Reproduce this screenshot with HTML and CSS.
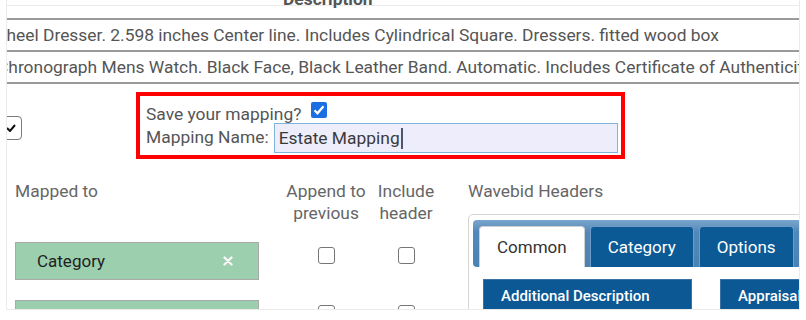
FILE: index.html
```html
<!DOCTYPE html>
<html lang="en">
<head>
<meta charset="utf-8">
<title>Mapping</title>
<link rel="stylesheet" href="styles.css">
</head>
<body>
<div class="frame">
  <div class="head"><div class="head-text">Description</div></div>
  <div class="desc-row first">Wheel Dresser. 2.598 inches Center line. Includes Cylindrical Square. Dressers. fitted wood box</div>
  <div class="desc-row second">Chronograph Mens Watch. Black Face, Black Leather Band. Automatic. Includes Certificate of Authenticity</div>

  <div class="settings">
    <div class="big-check">
      <svg width="10" height="8" viewBox="0 0 10 8"><path d="M1 4l3 3 5-6" stroke="#111" stroke-width="2" fill="none"/></svg>
    </div>
    <div class="save-box">
      <div class="save-line">
        <span>Save your mapping?</span>
        <span class="blue-check"><svg width="16" height="16" viewBox="0 0 16 16"><path d="M3.5 8.3l3 3 6-7" stroke="#fff" stroke-width="2.2" fill="none"/></svg></span>
      </div>
      <div class="name-line">
        <span class="name-label">Mapping Name:</span>
        <div class="name-input">Estate Mapping<span class="caret"></span></div>
      </div>
    </div>
  </div>

  <div class="mapping">
    <div class="map-left">
      <div class="map-head">
        <div class="c1">Mapped to</div>
        <div class="c2">Append to<br>previous</div>
        <div class="c3">Include<br>header</div>
      </div>
      <div class="map-row">
        <div class="c1"><div class="chip"><span>Category</span><svg width="10" height="10" viewBox="0 0 10 10"><path d="M1.5 1.5l7 7M8.5 1.5l-7 7" stroke="#f7f7f7" stroke-width="2.4" stroke-linecap="round"/></svg></div></div>
        <div class="c2"><span class="box"></span></div>
        <div class="c3"><span class="box"></span></div>
      </div>
      <div class="map-row next">
        <div class="c1"><div class="chip"></div></div>
        <div class="c2"><span class="box"></span></div>
        <div class="c3"><span class="box"></span></div>
      </div>
    </div>
    <div class="map-right">
      <div class="wh-label">Wavebid Headers</div>
      <div class="tabs-panel">
        <div class="tab-bar">
          <div class="tab active">Common</div>
          <div class="tab">Category</div>
          <div class="tab">Options</div>
        </div>
        <div class="btns">
          <div class="hbtn">Additional Description</div>
          <div class="hbtn">Appraisal</div>
        </div>
      </div>
    </div>
  </div>
</div>
</body>
</html>
```
FILE: styles.css
```css
html, body {
  margin: 0;
  padding: 0;
  background: #fff;
}

body {
  font-family: Roboto, "Liberation Sans", sans-serif;
}

.frame {
  margin-left: 6px;
  width: 792px;
  height: 309px;
  border: 1px solid #ebebeb;
  border-top: none;
  overflow: hidden;
}

.head {
  height: 18px;
  overflow: hidden;
  background: linear-gradient(to bottom, transparent 5px, #ebebeb 5px, #ebebeb 6px, transparent 6px);
}

.head-text {
  margin-top: -10px;
  padding-left: 276px;
  font-size: 17.4px;
  font-weight: bold;
  line-height: 18px;
  color: #555;
}

.desc-row {
  height: 30px;
  border-top: 2px solid #9a9a9a;
  line-height: 30px;
  font-size: 17.4px;
  color: #555;
  white-space: nowrap;
  overflow: hidden;
}

.desc-row.first {
  text-indent: -16px;
}

.desc-row.second {
  text-indent: -10px;
  border-bottom: 2px solid #9a9a9a;
}

.settings {
  display: flex;
  align-items: flex-start;
  padding-top: 8px;
}

.big-check {
  flex-shrink: 0;
  width: 24px;
  height: 24px;
  box-sizing: border-box;
  margin: 24px 0 0 -9px;
  border: 1px solid #7a7a7a;
  border-radius: 4px;
  background: #fff;
  display: flex;
  align-items: center;
  justify-content: center;
  padding-left: 2px;
}

.save-box {
  flex-shrink: 0;
  margin-left: 114px;
  width: 489px;
  height: 67px;
  box-sizing: border-box;
  border: 4px solid #ff0000;
  padding: 7px 0 0 6px;
  font-size: 17.4px;
  color: #555;
}

.save-line {
  display: flex;
  align-items: flex-start;
  height: 23px;
  line-height: 22px;
}

.blue-check {
  width: 16px;
  height: 16px;
  margin: -1px 0 0 10px;
  border-radius: 2px;
  background: #1b6fe2;
  display: flex;
}

.name-line {
  display: flex;
  align-items: center;
  height: 30px;
  margin-top: -3px;
}

.name-label {
  margin-top: -3px;
}

.name-input {
  margin-left: 5px;
  width: 344px;
  height: 30px;
  box-sizing: border-box;
  border: 1px solid #80b2da;
  background: #eeedfc;
  padding-left: 4px;
  line-height: 28px;
  color: #3a3a3a;
  display: flex;
  align-items: center;
}

.caret {
  display: inline-block;
  width: 2px;
  height: 21px;
  margin-left: 1px;
  background: #4d5570;
}

.mapping {
  display: flex;
  margin-top: 21px;
  padding-left: 8px;
}

.map-left {
  flex-shrink: 0;
}

.map-head {
  display: flex;
  line-height: 22px;
  font-size: 17.4px;
  color: #666;
}

.c1 {
  width: 271px;
}

.c2, .c3 {
  width: 80px;
  text-align: center;
}

.map-row {
  display: flex;
  margin-top: 18px;
}

.map-row.next {
  margin-top: 20px;
}

.chip {
  width: 244px;
  height: 38px;
  box-sizing: border-box;
  border: 1px solid #a9a9a9;
  background: #9ccfad;
  display: flex;
  align-items: center;
  justify-content: space-between;
  padding: 0 25px 0 21px;
  font-size: 17px;
  color: #222;
}

.box {
  display: inline-block;
  width: 17px;
  height: 17px;
  box-sizing: border-box;
  margin-top: 5px;
  border: 1px solid #767676;
  border-radius: 3px;
  background: #fff;
}

.map-right {
  flex-shrink: 0;
  width: 360px;
  margin-left: 22px;
}

.wh-label {
  line-height: 22px;
  font-size: 17.4px;
  color: #666;
}

.tabs-panel {
  margin-top: 12px;
  border: 1px solid #d6d6d6;
  border-radius: 5px;
  padding: 5px 4px;
  height: 120px;
}

.tab-bar {
  display: flex;
  gap: 5px;
  height: 47px;
  box-sizing: border-box;
  padding: 6px 0 0 6px;
  border-radius: 4px;
  background: linear-gradient(to bottom, #7ba5cc 0%, #5389ba 25%, #4a82b4 100%);
}

.tab {
  height: 41px;
  box-sizing: border-box;
  padding: 10px 17px 0;
  border: 1px solid #6f9bc4;
  border-bottom: none;
  border-radius: 4px 4px 0 0;
  background: #0b5a96;
  color: #fff;
  font-size: 17px;
  line-height: 20px;
}

.tab.active {
  background: #fff;
  color: #333;
  border-color: #d0d0d0;
}

.btns {
  display: flex;
  gap: 28px;
  padding: 12px 0 0 10px;
}

.hbtn {
  flex-shrink: 0;
  width: 209px;
  height: 40px;
  box-sizing: border-box;
  padding: 7px 0 0 17px;
  border: 1px solid #3a72a6;
  background: #0b5894;
  color: #fff;
  font-size: 15px;
  font-weight: 500;
  line-height: 18px;
}
```
